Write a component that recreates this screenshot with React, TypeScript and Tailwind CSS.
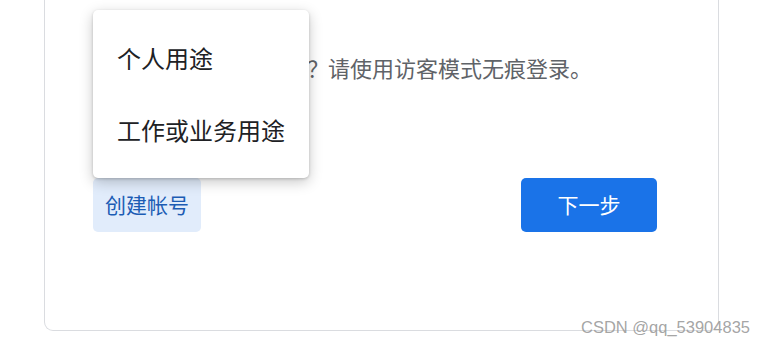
const cjk = "font-['Noto_Sans_CJK_SC',sans-serif]";

function UsageMenu() {
  return (
    <div className="absolute left-[93px] top-[10px] w-[216px] rounded-[5px] bg-white py-[12px] shadow-[0_4px_14px_rgba(0,0,0,0.22),0_1px_3px_rgba(0,0,0,0.18)]">
      {["个人用途", "工作或业务用途"].map((label) => (
        <div key={label} className="flex h-[72px] items-center px-[24px] text-[24px] leading-none text-[#202124]">
          {label}
        </div>
      ))}
    </div>
  );
}

export default function App() {
  return (
    <div className={`relative h-[343px] w-[765px] overflow-hidden bg-white ${cjk}`}>
      <div className="ml-[44px] flex h-[331px] w-[675px] flex-col rounded-b-[9px] border-x border-b border-[#dadce0] pl-[48px] pr-[61px]">
        {/* partly covered by the open menu */}
        <p className="mt-[52px] whitespace-nowrap pl-[16px] text-[22px] leading-[30px] text-[#5f6368]">
          不是您自己的计算机？<span className="ml-[-1px]">请使用访客模式无痕登录。</span>
        </p>
        <div className="mt-[96px] flex items-center justify-between">
          <button className="h-[54px] rounded-[5px] bg-[#e1ecfb] px-[12px] text-[21px] text-[#1c5cb4]">
            创建帐号
          </button>
          <button className="h-[54px] w-[136px] rounded-[5px] bg-[#1a73e8] text-[21px] text-white">
            下一步
          </button>
        </div>
      </div>

      <UsageMenu />

      <span className="absolute bottom-[8px] right-[15px] font-['Liberation_Sans',sans-serif] text-[16.5px] leading-none text-[#9a9a9a]/90">
        CSDN @qq_53904835
      </span>
    </div>
  );
}
